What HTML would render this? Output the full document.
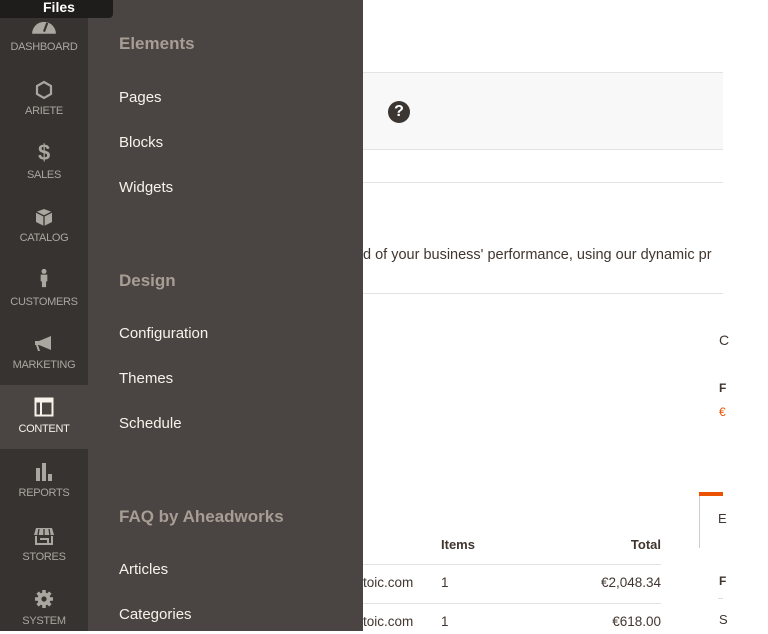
<!DOCTYPE html>
<html><head><meta charset="utf-8"><style>
*{margin:0;padding:0;box-sizing:border-box}
body{width:768px;height:631px;overflow:hidden;background:#fff;font-family:"Liberation Sans",sans-serif;position:relative}
.side{position:absolute;left:0;top:0;width:88px;height:631px;background:#373330}
.it{position:absolute;left:0;width:88px;height:64px;text-align:center;color:#aaa6a0;font-size:11px;letter-spacing:-0.3px}
.it .ic{position:absolute;left:34px;width:20px;height:20px}
.it span{position:absolute;left:0;width:88px;text-align:center}
.act{background:#4a4542;color:#f7f3eb}
.fly{position:absolute;left:88px;top:0;width:275px;height:631px;background:#4a4542}
.fly div{position:absolute;left:31px;font-size:15px;color:#f7f3eb}
.fly .h{font-size:17px;color:#a79d95;font-weight:bold}
.tip{position:absolute;left:0;top:0;width:113px;height:18px;background:#1f1d1b;border-radius:0 0 4px 0;color:#fff;font-size:14px;font-weight:bold;padding-left:43px;line-height:14px;z-index:5}
.txt{position:absolute;color:#41362f;font-size:14px}
</style></head><body>
<div style="position:absolute;left:363px;top:72px;width:360px;height:78px;background:#f8f8f8;border-top:1px solid #e3e3e3;border-bottom:1px solid #e3e3e3"></div>
<div style="position:absolute;left:388px;top:101px;width:22px;height:22px;border-radius:50%;background:#3b3632;color:#fff;font-weight:bold;font-size:16px;text-align:center;line-height:22px">?</div>
<div style="position:absolute;left:363px;top:182px;width:360px;height:1px;background:#e3e3e3"></div>
<div class="txt" style="left:363px;top:247px;white-space:nowrap;width:360px;overflow:hidden;font-size:14.5px">d of your business' performance, using our dynamic pr</div>
<div style="position:absolute;left:363px;top:293px;width:360px;height:1px;background:#e3e3e3"></div>
<div class="txt" style="left:719px;top:332px">C</div>
<div class="txt" style="left:719px;top:381px;font-weight:bold;font-size:12px">F</div>
<div class="txt" style="left:719px;top:405px;color:#eb5202;font-size:12px">€</div>
<div style="position:absolute;left:699px;top:492px;width:24px;height:4px;background:#eb5202"></div>
<div style="position:absolute;left:699px;top:496px;width:1px;height:52px;background:#ccc"></div>
<div class="txt" style="left:718px;top:511px;font-size:13px">E</div>
<div class="txt" style="left:719px;top:574px;font-weight:bold;font-size:12px">F</div>
<div class="txt" style="left:719px;top:612px;font-size:13px">S</div>
<div style="position:absolute;left:718px;top:598px;width:5px;height:1px;background:#ddd"></div>
<div class="txt" style="left:441px;top:537px;font-weight:bold;font-size:13px">Items</div>
<div class="txt" style="left:560px;top:537px;width:101px;text-align:right;font-weight:bold;font-size:13px">Total</div>
<div style="position:absolute;left:363px;top:564px;width:298px;height:1px;background:#e3e3e3"></div>
<div class="txt" style="left:363px;top:575px;font-size:13.5px">toic.com</div>
<div class="txt" style="left:441px;top:575px;font-size:13.5px">1</div>
<div class="txt" style="left:560px;top:575px;width:101px;text-align:right;font-size:13.5px">€2,048.34</div>
<div style="position:absolute;left:363px;top:603px;width:298px;height:1px;background:#e3e3e3"></div>
<div class="txt" style="left:363px;top:614px;font-size:13.5px">toic.com</div>
<div class="txt" style="left:441px;top:614px;font-size:13.5px">1</div>
<div class="txt" style="left:560px;top:614px;width:101px;text-align:right;font-size:13.5px">€618.00</div>

<div class="side">
<div class="it" style="top:-4px"><svg class="ic" style="top:16px;left:31px;width:26px;height:24px" viewBox="0 0 24 22"><path d="M1 20 A11 11 0 0 1 23 20 Z" fill="#aaa6a0"/><path d="M12 18 L15 10" stroke="#373330" stroke-width="2"/></svg><span style="top:45px">DASHBOARD</span></div>
<div class="it" style="top:60px"><svg class="ic" style="top:20px" viewBox="0 0 20 20"><path d="M10 2 L17 6 L17 14 L10 18 L3 14 L3 6 Z" fill="none" stroke="#aaa6a0" stroke-width="2.2"/></svg><span style="top:45px">ARIETE</span></div>
<div class="it" style="top:124px"><div class="ic" style="top:17px;font-size:22px;font-weight:bold;line-height:24px">$</div><span style="top:45px">SALES</span></div>
<div class="it" style="top:187px"><svg class="ic" style="top:20px" viewBox="0 0 20 20"><path d="M10 2 L18 5 L18 15 L10 19 L2 15 L2 5 Z" fill="#aaa6a0"/><path d="M2 5 L10 9 L18 5 M10 9 L10 19" stroke="#373330" stroke-width="1.3" fill="none"/></svg><span style="top:45px">CATALOG</span></div>
<div class="it" style="top:251px"><svg class="ic" style="top:17px" viewBox="0 0 20 24"><circle cx="10" cy="4" r="3" fill="#aaa6a0"/><path d="M6 8 H14 V16 H12.5 V23 H7.5 V16 H6 Z" fill="#aaa6a0"/></svg><span style="top:45px">CUSTOMERS</span></div>
<div class="it" style="top:314px"><svg class="ic" style="top:20px" viewBox="0 0 20 20"><path d="M1 7 H5 L17 2 V16 L5 11 H4 L6 17 H4 L2 11 H1 Z" fill="#aaa6a0"/></svg><span style="top:45px">MARKETING</span></div>
<div class="it act" style="top:385px"><svg class="ic" style="top:12px" viewBox="0 0 20 20"><rect x="1.5" y="1.5" width="17" height="17" fill="none" stroke="#f7f3eb" stroke-width="2"/><rect x="1.5" y="1.5" width="17" height="4" fill="#f7f3eb"/><path d="M7 5 V18" stroke="#f7f3eb" stroke-width="2"/></svg><span style="top:38px">CONTENT</span></div>
<div class="it" style="top:442px"><svg class="ic" style="top:20px" viewBox="0 0 20 20"><rect x="2" y="6" width="4" height="13" fill="#aaa6a0"/><rect x="8" y="1" width="4" height="18" fill="#aaa6a0"/><rect x="14" y="12" width="4" height="7" fill="#aaa6a0"/></svg><span style="top:45px">REPORTS</span></div>
<div class="it" style="top:506px"><svg class="ic" style="top:20px;left:31px;width:26px" viewBox="0 0 22 20"><path d="M3 2 H19 L21 9 H1 Z" fill="#aaa6a0"/><path d="M6 3 L5 9 M11 3 V9 M16 3 L17 9" stroke="#373330" stroke-width="1.3"/><path d="M3 10 V18 H19 V10 M7 13 H15 V18" stroke="#aaa6a0" stroke-width="2" fill="none"/></svg><span style="top:45px">STORES</span></div>
<div class="it" style="top:570px"><svg class="ic" style="top:19px" viewBox="0 0 20 20"><circle cx="10" cy="10" r="6.5" fill="#aaa6a0"/><g stroke="#aaa6a0" stroke-width="3.5"><path d="M10 1 V19 M1 10 H19 M3.6 3.6 L16.4 16.4 M16.4 3.6 L3.6 16.4"/></g><circle cx="10" cy="10" r="2.6" fill="#373330"/></svg><span style="top:45px">SYSTEM</span></div>
</div>
<div class="fly">
<div class="h" style="top:34px">Elements</div>
<div style="top:89px">Pages</div>
<div style="top:134px">Blocks</div>
<div style="top:179px">Widgets</div>
<div class="h" style="top:271px">Design</div>
<div style="top:325px">Configuration</div>
<div style="top:370px">Themes</div>
<div style="top:415px">Schedule</div>
<div class="h" style="top:507px">FAQ by Aheadworks</div>
<div style="top:561px">Articles</div>
<div style="top:606px">Categories</div>
</div>
<div class="tip">Files</div>
</body></html>
